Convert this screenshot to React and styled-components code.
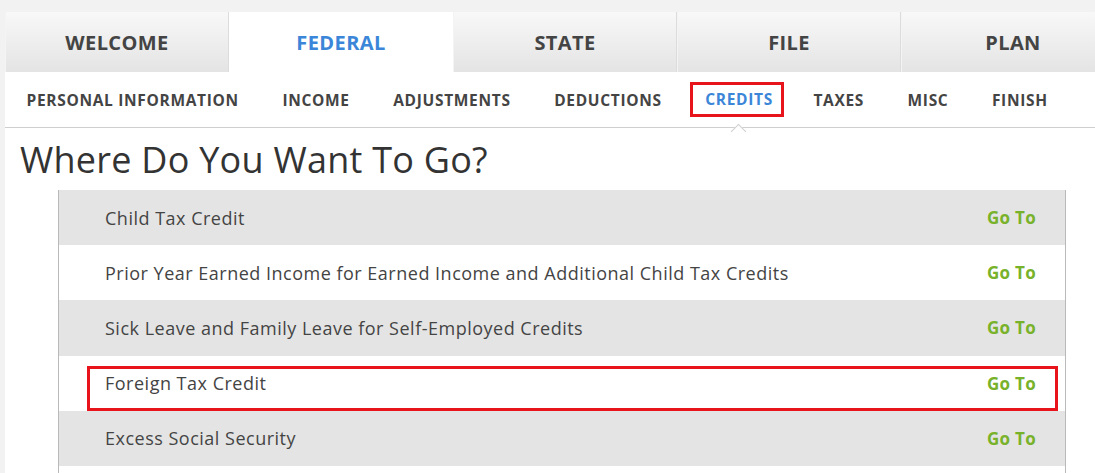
import React from 'react';
import styled, { createGlobalStyle } from 'styled-components';

const GlobalStyle = createGlobalStyle`
  html, body {
    margin: 0;
    padding: 0;
    background: #f2f2f2;
    font-family: "Open Sans", "Liberation Sans", Arial, sans-serif;
  }
`;

const tabs = ['WELCOME', 'FEDERAL', 'STATE', 'FILE', 'PLAN'];
const subTabs = ['PERSONAL INFORMATION', 'INCOME', 'ADJUSTMENTS', 'DEDUCTIONS', 'CREDITS', 'TAXES', 'MISC', 'FINISH'];
const destinations = [
  'Child Tax Credit',
  'Prior Year Earned Income for Earned Income and Additional Child Tax Credits',
  'Sick Leave and Family Leave for Self-Employed Credits',
  'Foreign Tax Credit',
  'Excess Social Security',
  '',
];

const App = () => {
  return (
    <>
      <GlobalStyle />
      <Page>
        <TabBar>
          {tabs.map((t) => (
            <Tab key={t} $active={t === 'FEDERAL'}>{t}</Tab>
          ))}
        </TabBar>
        <SubNav>
          {subTabs.map((s) => (
            <SubItem key={s} $active={s === 'CREDITS'}>
              {s === 'CREDITS' ? <Highlight>{s}</Highlight> : s}
            </SubItem>
          ))}
        </SubNav>
        <Heading>Where Do You Want To Go?</Heading>
        <List>
          {destinations.map((d, i) => (
            <Row key={i} $shaded={i % 2 === 0}>
              <Label>{d}</Label>
              {d && <GoTo>Go To</GoTo>}
              {d === 'Foreign Tax Credit' && <RowMark />}
            </Row>
          ))}
        </List>
      </Page>
    </>
  );
};

const Page = styled.div`
  margin: 12px 0 0 5px;
  background: #fff;
  height: 461px;
  overflow: hidden;
`;

const TabBar = styled.div`
  display: flex;
  height: 60px;
  background: #f2f2f2;
`;

const Tab = styled.div`
  flex: 0 0 224px;
  box-sizing: border-box;
  display: flex;
  align-items: center;
  justify-content: center;
  font-weight: 700;
  font-size: 20px;
  letter-spacing: 0.4px;
  color: ${(p) => (p.$active ? '#3b86d8' : '#444')};
  background: ${(p) => (p.$active ? '#fff' : 'linear-gradient(#f8f8f8, #e4e4e4)')};
  border-left: 1px solid ${(p) => (p.$active ? '#fff' : '#f4f4f4')};
  border-right: 1px solid ${(p) => (p.$active ? '#fff' : '#dcdcdc')};
`;

const SubNav = styled.div`
  display: flex;
  align-items: center;
  height: 55px;
  border-bottom: 1px solid #cfcfcf;
`;

const SubItem = styled.div`
  position: relative;
  padding: 0 22px 0 21.5px;
  font-weight: 700;
  font-size: 15.5px;
  letter-spacing: 0.68px;
  color: ${(p) => (p.$active ? '#3b86d8' : '#444')};
  white-space: nowrap;

  ${(p) => p.$active && `
    &::after {
      content: '';
      position: absolute;
      left: 50%;
      bottom: -20px;
      width: 10px;
      height: 10px;
      margin-left: -5px;
      background: #fff;
      border-left: 1px solid #cfcfcf;
      border-top: 1px solid #cfcfcf;
      transform: rotate(45deg);
    }
  `}
`;

const Highlight = styled.span`
  display: inline-block;
  margin: 0 -14px 0 -15px;
  padding: 3px 8px 4px 12px;
  border: 3px solid #e8141c;
`;

const Heading = styled.h1`
  margin: 0;
  padding: 12px 0 0 15px;
  height: 50px;
  font-weight: 400;
  font-size: 36px;
  line-height: 40px;
  color: #333;
  letter-spacing: 0.25px;
`;

const List = styled.div`
  margin-left: 53px;
  width: 1008px;
  border-left: 1px solid #b9b9b9;
  border-right: 1px solid #b9b9b9;
  box-sizing: border-box;
`;

const Row = styled.div`
  position: relative;
  display: flex;
  align-items: center;
  justify-content: space-between;
  height: 55.2px;
  padding: 0 29px 0 46px;
  background: ${(p) => (p.$shaded ? '#e4e4e4' : '#fff')};
`;

const Label = styled.span`
  font-size: 18px;
  letter-spacing: 0.5px;
  color: #444;
`;

const GoTo = styled.span`
  font-weight: 700;
  font-size: 17px;
  letter-spacing: 0.3px;
  color: #78b22a;
`;

const RowMark = styled.div`
  position: absolute;
  left: 28px;
  right: 7px;
  top: 10px;
  bottom: 0;
  border: 3px solid #e8141c;
  pointer-events: none;
`;

export default App;
